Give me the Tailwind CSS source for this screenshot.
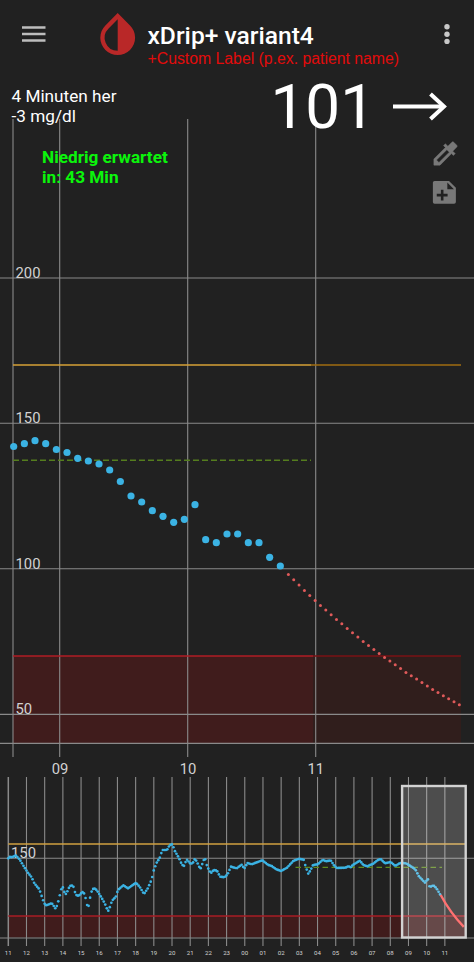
<!DOCTYPE html>
<html lang="de">
<head>
  <meta charset="UTF-8" />
  <meta name="viewport" content="width=device-width, initial-scale=1.0" />
  <title>xDrip+ variant4</title>
  <script src="https://cdn.jsdelivr.net/npm/@tailwindcss/browser@4"></script>
</head>
<body class="bg-[#212121] font-[Roboto,sans-serif] text-white overflow-hidden">

  <div class="w-[474px] h-[962px] flex flex-col">

    <header class="h-20 shrink-0 flex items-start pl-[22px] pr-[15px]">
      <button class="mt-[26px]" aria-label="Menu">
        <svg class="w-6 h-4" viewBox="0 0 24 16" stroke="#bdbdbd" stroke-width="2.3">
          <path d="M0 1.5H23.5M0 8H23.5M0 14.5H23.5" />
        </svg>
      </button>
      <svg class="ml-[54px] mt-[13px] w-[36px] h-[43px]" viewBox="0 0 36 43">
        <path d="M17.7 0 L30 12.4 A17.4 17.4 0 1 1 5.4 12.4 Z" fill="#b92828" />
        <path d="M17.7 6.3 L8.6 15.5 A13 13 0 0 0 17.7 37.8 Z" fill="#212121" />
      </svg>
      <div class="ml-[11.5px] pt-[22px] flex-1 whitespace-nowrap">
        <h1 class="text-[24.6px] leading-[27px] font-medium">xDrip+ variant4</h1>
        <p class="text-[15.8px] leading-[20px] text-[#e30b0b] font-['Liberation_Sans',sans-serif]">+Custom Label (p.ex. patient name)</p>
      </div>
      <svg class="mt-6 w-6 h-5" viewBox="0 0 24 20" fill="#c8c8c8">
        <circle cx="12" cy="2.7" r="2.7" />
        <circle cx="12" cy="10.2" r="2.7" />
        <circle cx="12" cy="17.5" r="2.7" />
      </svg>
    </header>

    <section class="relative h-[697px] shrink-0">
      <svg id="chart" class="absolute inset-0 w-full h-full overflow-visible" viewBox="0 80 474 697"></svg>

      <div class="relative flex justify-between pl-[11.5px] pr-[25px]">
        <div class="whitespace-nowrap">
          <p class="pt-[6px] text-[17.2px] leading-[20px]">4 Minuten her<br />-3 mg/dl</p>
          <p class="pt-[21px] pl-[30.5px] text-[17.2px] leading-5 font-bold text-[#0bf50b]">Niedrig erwartet<br />in: 43 Min</p>
        </div>
        <div class="flex items-start">
          <span class="pt-[2px] text-[62px] leading-[50px]">101</span>
          <svg class="ml-[18px] mt-[11px] w-[56px] h-[31px]" viewBox="0 0 56 31" fill="none" stroke="#fff" stroke-width="4">
            <path d="M0 15.5 H51" />
            <path d="M37.5 3 L51 15.5 L37.5 28" />
          </svg>
        </div>
      </div>

      <div class="absolute right-[13px] top-[58px] flex flex-col gap-[7.5px]">
        <svg class="w-[31px] h-[31px] ml-[1.5px]" viewBox="0 0 24 24" fill="#787878" stroke="#787878" stroke-width="0.4">
          <path d="M20.71 5.63l-2.34-2.34c-.39-.39-1.02-.39-1.41 0l-3.12 3.12-1.93-1.91-1.41 1.41 1.42 1.42L3 16.25V21h4.75l8.92-8.92 1.42 1.42 1.41-1.41-1.92-1.92 3.12-3.12c.4-.4.4-1.03.01-1.42zM6.92 19L5 17.08l8.06-8.06 1.92 1.92L6.92 19z" />
        </svg>
        <svg class="w-[31px] h-[31px]" viewBox="0 0 24 24">
          <path d="M4.3 3h11.2L20.8 8.3V19.4a1.4 1.4 0 0 1-1.4 1.4H4.3A1.4 1.4 0 0 1 3 19.4V4.3A1.4 1.4 0 0 1 4.3 3z" fill="#787878" />
          <path d="M14.2 4.3V9.4H19.3z M9.2 9.8h2v3.2h3.2v2h-3.2v3.2h-2v-3.2h-3.2v-2h3.2z" fill="#212121" />
        </svg>
      </div>
    </section>

    <section class="h-[185px] shrink-0">
      <svg id="overview" class="w-full h-full" viewBox="0 777 474 185"></svg>
    </section>
  </div>

  <script>
    const line = (x1, y1, x2, y2, color, w = 1, extra = "") =>
      `<line x1="${x1}" y1="${y1}" x2="${x2}" y2="${y2}" stroke="${color}" stroke-width="${w}" ${extra}/>`;
    const rect = (x, y, w, h, fill, extra = "") =>
      `<rect x="${x}" y="${y}" width="${w}" height="${h}" fill="${fill}" ${extra}/>`;
    const dot = (x, y, r, color) => `<circle cx="${x}" cy="${y}" r="${r}" fill="${color}"/>`;
    const text = (x, y, size, s, anchor = "start") =>
      `<text x="${x}" y="${y}" font-size="${size}" fill="#d2d2d2" text-anchor="${anchor}">${s}</text>`;

    // main chart
    const readings = [446.5, 443.7, 440.7, 443.7, 449.5, 452.5, 458.3, 461, 464, 470, 481.5, 496, 502,
      510.7, 516.3, 522.3, 519.3, 504.7, 539.7, 542.7, 534, 534, 542.7, 542.7, 557.3, 566];
    const forecast = [43, 59, 75, 91, 106, 121, 136, 150, 164, 178, 191, 205, 218, 231, 244, 256, 268,
      280, 292, 303, 314, 325, 337, 347, 357, 367, 378, 388, 397, 407, 416, 425, 434];

    let out = "";
    out += rect(13, 656, 300, 87.5, "#401c1c") + rect(313, 656, 148, 87.5, "#301e1c");
    [13, 59.7, 187.7, 315.7].forEach(x => out += line(x, 119, x, 757, "#8a8a8a", 1.1));
    [[278, 200], [423.3, 150], [568.8, 100], [714.4, 50]].forEach(([y, v]) => {
      out += line(0, y, 474, y, "#8a8a8a", 1.1) + text(15.5, y - 0.3, 14.8, v);
    });
    out += line(0, 743.4, 474, 743.4, "#8a8a8a", 1.1);
    out += line(13, 365, 311, 365, "#d6a036", 1.7) + line(311, 365, 461, 365, "#a06c10", 1.7);
    out += line(13, 656, 313, 656, "#b01c24", 1.7) + line(313, 656, 461, 656, "#7a1214", 1.7);
    out += line(13, 460.2, 311, 460.2, "#557d1e", 1.5, 'stroke-dasharray="6 3"');
    readings.forEach((y, i) => out += dot(13.7 + i * 10.665, y, 3.6, "#3bb3e4"));
    forecast.forEach((y, i) => out += dot(288.4 + i * 5.342, 560 + y / 3 + 0.1, 1.5, "#e05a5a"));
    out += text(60, 773.8, 14.8, "09", "middle") + text(188, 773.8, 14.8, "10", "middle") + text(315.7, 773.8, 14.8, "11", "middle");
    document.getElementById("chart").innerHTML = out;

    // 24h overview
    const trace = [[8.3, 858.3], [10, 856.7], [11.7, 857.3], [16, 855.5], [20, 860], [24, 866.7], [28.3, 873.3],
      [31.7, 877.3], [34.3, 883.3], [39.3, 889.3], [41.3, 895], [43.3, 900.7], [45.3, 905.3], [48.3, 904.7],
      [51.7, 903], [55.3, 908.3], [57.3, 905.3], [59.3, 897.3], [61.3, 889.3], [62.7, 887], [64, 891.3],
      [65.7, 894.3], [67.7, 890.7], [69.7, 886], [73, 885.3], [75.7, 894.7], [78.7, 896], [82.3, 892],
      [84.7, 894], [86, 900], [88, 909.3], [89.7, 899.3], [91.7, 891.3], [93.7, 888], [96.7, 890], [100, 895.3],
      [103.3, 900.7], [105.3, 904.7], [108, 911.3], [110, 906.7], [112, 900.7], [115.7, 897], [118, 890],
      [123.3, 885.3], [128, 888.3], [133.3, 884.7], [136, 882.7], [140, 887.3], [144, 894], [148, 888],
      [151.7, 879.3], [154, 869.3], [156.7, 862.7], [159.7, 858], [162.3, 850], [167, 850], [169.7, 845],
      [172.3, 844.3], [175, 851.3], [179, 858], [181.3, 863.3], [183.7, 866.7], [186.7, 859.3], [190.7, 864],
      [193, 862.7], [195, 858.7], [197, 862], [200.3, 869.3], [203.7, 860], [205.3, 859.3], [207, 866],
      [210.7, 873.3], [213.7, 870], [217, 870.7], [220, 876.7], [224.3, 877.3], [227.3, 874.7], [231, 866.7],
      [236.7, 868.3], [241.7, 864.7], [244.3, 868.7], [247.3, 863], [251.7, 864.3], [262.3, 860.3], [268.3, 865],
      [271.7, 866], [276.3, 869.3], [281, 871], [287, 867.7], [293.3, 861], [299, 858.7], [303.7, 859.7],
      [305.7, 866.7], [308.3, 873.7], [310.3, 870.7], [313, 865], [318, 864.3], [322.7, 859.7], [326, 861.3],
      [330.7, 860.3], [334, 865.3], [336.7, 868], [345.7, 867.7], [348.7, 866], [350.3, 867.7], [352.7, 865],
      [360, 860.7], [363.3, 865], [367.3, 866.3], [373.3, 863.7], [377.3, 860.3], [380.7, 859], [385, 863.3],
      [390.7, 862], [395.3, 866], [400, 863], [406, 863.3], [408.7, 865], [415.3, 869.3], [418.7, 876],
      [425.3, 883], [427.7, 878.3], [429.7, 887.3], [433.3, 885.3], [436.3, 888], [440, 894.3]];

    out = rect(8.3, 916, 457, 21.5, "#401c1c");
    for (let i = 0; i < 25; i++) {
      const x = 8.3 + i * 18.19;
      out += line(x, 777, x, 946, "#8a8a8a", i ? 1.1 : 1.5);
      out += text(x, 954.8, 6.1, String((i + 11) % 24).padStart(2, "0"), "middle");
    }
    out += line(0, 858.3, 474, 858.3, "#8a8a8a", 1.1) + line(0, 938, 474, 938, "#8a8a8a", 1.1);
    out += text(11, 858, 14.8, "150");
    out += line(8.3, 844, 465, 844, "#d0a040", 1.7) + line(8.3, 916, 465, 916, "#a81c24", 1.7);
    out += line(295.5, 867.4, 442, 867.4, "#5f8a1e", 1.3, 'stroke-dasharray="5.5 3.5"');
    // one dot per five minutes
    let k = 0;
    for (let x = 8.3; x < 440.5; x += 1.515) {
      while (k < trace.length - 2 && trace[k + 1][0] < x) k++;
      const [x1, y1] = trace[k], [x2, y2] = trace[k + 1];
      out += dot(x, y1 + (y2 - y1) * (x - x1) / (x2 - x1), 1.35, "#3bb3e4");
    }
    out += `<path d="M440.7 895 Q450 912.5 463.8 926.8" fill="none" stroke="#ff4e4e" stroke-width="2.4"/>`;
    out += rect(402.1, 786, 63.6, 151.5, "#fff", 'fill-opacity="0.2" stroke="#d3d3d3" stroke-width="2.4"');
    document.getElementById("overview").innerHTML = out;
  </script>

</body>
</html>
